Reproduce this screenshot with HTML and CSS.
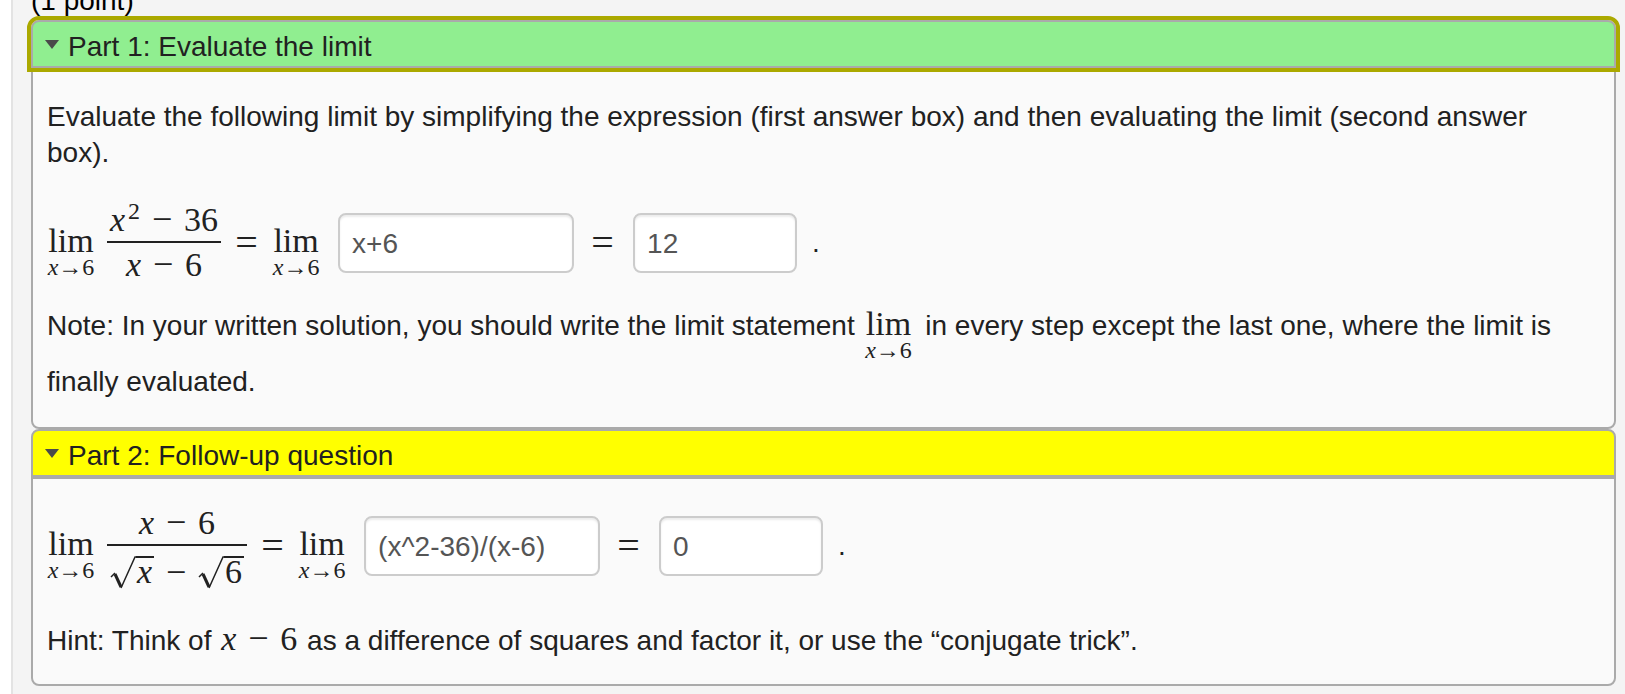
FILE: index.html
```html
<!DOCTYPE html>
<html lang="en">
  <head>
    <meta charset="UTF-8" />
    <meta name="viewport" content="width=device-width, initial-scale=1.0" />
    <title>Limits</title>
    <link rel="stylesheet" href="styles.css">
  </head>
  <body>
    <main class="problem">
      <div class="points">(1 point)</div>

      <details class="part" open>
        <summary class="part-title correct focused">
          <svg class="arrow" viewBox="0 0 14 9"><path d="M0 0H14L7 9Z" /></svg>
          Part 1: Evaluate the limit
        </summary>
        <div class="part-body">
          <p>
            Evaluate the following limit by simplifying the expression (first
            answer box) and then evaluating the limit (second answer box).
          </p>
          <div class="equation">
            <span class="lim"><span>lim</span><span class="under"><i>x</i>→6</span></span>
            <span class="frac">
              <span class="num"><i>x</i><sup>2</sup><span class="op">−</span>36</span>
              <span class="den"><i>x</i><span class="op">−</span>6</span>
            </span>
            <span class="eq">=</span>
            <span class="lim"><span>lim</span><span class="under"><i>x</i>→6</span></span>
            <input class="answer wide" type="text" aria-label="Simplified expression" value="x+6" />
            <span class="eq">=</span>
            <input class="answer" type="text" aria-label="Value of the limit" value="12" />
            <span class="stop">.</span>
          </div>
          <p>
            Note: In your written solution, you should write the limit statement
            <span class="lim inline"><span>lim</span><span class="under"><i>x</i>→6</span></span>
            in every step except the last one, where the limit is finally
            evaluated.
          </p>
        </div>
      </details>

      <details class="part followup" open>
        <summary class="part-title partial">
          <svg class="arrow" viewBox="0 0 14 9"><path d="M0 0H14L7 9Z" /></svg>
          Part 2: Follow-up question
        </summary>
        <div class="part-body">
          <div class="equation">
            <span class="lim"><span>lim</span><span class="under"><i>x</i>→6</span></span>
            <span class="frac">
              <span class="num"><i>x</i><span class="op">−</span>6</span>
              <span class="den roots">
                <span class="sqrt">
                  <svg class="surd" viewBox="0 0 26 34"><path class="thin" d="M1 21L5 17M11 32L25 1H26" /><path class="thick" d="M5 18L11 31" /></svg>
                  <span class="radicand"><i>x</i></span>
                </span>
                <span class="op">−</span>
                <span class="sqrt">
                  <svg class="surd" viewBox="0 0 26 34"><path class="thin" d="M1 21L5 17M11 32L25 1H26" /><path class="thick" d="M5 18L11 31" /></svg>
                  <span class="radicand">6</span>
                </span>
              </span>
            </span>
            <span class="eq">=</span>
            <span class="lim"><span>lim</span><span class="under"><i>x</i>→6</span></span>
            <input class="answer wide" type="text" aria-label="Simplified expression" value="(x^2-36)/(x-6)" />
            <span class="eq">=</span>
            <input class="answer" type="text" aria-label="Value of the limit" value="0" />
            <span class="stop">.</span>
          </div>
          <p>
            Hint: Think of
            <span class="math"><i>x</i><span class="op">−</span>6</span>
            as a difference of squares and factor it, or use the “conjugate
            trick”.
          </p>
        </div>
      </details>
    </main>
  </body>
</html>
```
FILE: styles.css
```css
* {
  box-sizing: border-box;
}

body {
  margin: 0;
  background-color: #fff;
  color: #212121;
  font-family: "Liberation Sans", Arial, sans-serif;
  font-size: 28px;
  line-height: 36px;
}

.problem {
  min-height: 100vh;
  margin-left: 11px;
  padding: 0 9px 8px 18px;
  border-left: 2px solid #e3e3e3;
  background-color: #f4f4f4;
  display: flow-root;
}

.points {
  margin: -17px 0 1px;
  color: #000;
}

.part-title {
  display: flex;
  align-items: center;
  gap: 9px;
  height: 48px;
  padding: 6px 12px 0;
  border: 2px solid #aaa;
  border-radius: 8px 8px 0 0;
  list-style: none;
  cursor: pointer;
}

.correct {
  background-color: #90ee90;
}

.partial {
  background-color: #ff0;
}

.focused {
  position: relative;
  outline: 4px solid #aba900;
}

.arrow {
  width: 14px;
  height: 9px;
  margin-bottom: 6px;
  fill: #4a4a4a;
}

.part-body {
  padding: 29px 32px 27px 14px;
  border: 2px solid #aaa;
  border-radius: 0 0 8px 8px;
  background-color: #fafafa;
}

.part-body p {
  margin: 0;
}

.equation {
  display: flex;
  align-items: center;
  margin: 32px 0 25px;
}

.followup .part-body {
  padding-top: 23px;
  padding-bottom: 25px;
}

.followup .equation {
  margin: 0 0 32px;
}

/* math */
.lim,
.frac,
.eq,
.math {
  font-family: "Liberation Serif", "Times New Roman", serif;
  font-size: 34px;
}

.lim {
  display: inline-flex;
  flex-direction: column;
  align-items: center;
  width: 48px;
  padding-top: 17px;
  line-height: 30px;
}

.lim.inline {
  margin: 0 5px 0 2px;
  padding: 0 0 3px;
}

.under {
  font-size: 24px;
  line-height: 22px;
}

.frac {
  display: inline-grid;
  grid-template-rows: 1fr 1fr;
  margin-left: 12px;
  line-height: 34px;
  text-align: center;
}

.num {
  align-self: end;
  padding: 0 3px 4px;
  border-bottom: 2px solid #212121;
}

.num sup {
  margin-left: 3px;
  font-size: 24px;
  line-height: 0;
  vertical-align: 12px;
}

.den {
  padding: 5px 3px 0;
}

.roots {
  display: flex;
  padding-top: 10px;
}

.op {
  display: inline-block;
  width: 44px;
  font-size: 36px;
  line-height: 32px;
  text-align: center;
}

.math {
  padding: 0 2px;
  line-height: 32px;
}

.sqrt {
  display: flex;
}

.surd {
  width: 26px;
  height: 34px;
  fill: none;
  stroke: #212121;
}

.thin {
  stroke-width: 1.5;
}

.thick {
  stroke-width: 3;
}

.radicand {
  height: 28px;
  padding: 0 2px 0 1px;
  border-top: 2px solid #212121;
  line-height: 28px;
}

.eq {
  width: 51px;
  font-size: 40px;
  line-height: 40px;
  text-align: center;
}

.answer {
  width: 164px;
  height: 60px;
  margin-left: 5px;
  padding: 2px 12px 0;
  border: 2px solid #ccc;
  border-radius: 8px;
  background-color: #fff;
  box-shadow: inset 0 2px 2px rgba(0, 0, 0, 0.08);
  color: #555;
  font: inherit;
}

.answer.wide {
  width: 236px;
  margin: 0 3px 0 18px;
}

.stop {
  margin-left: 15px;
}
```
